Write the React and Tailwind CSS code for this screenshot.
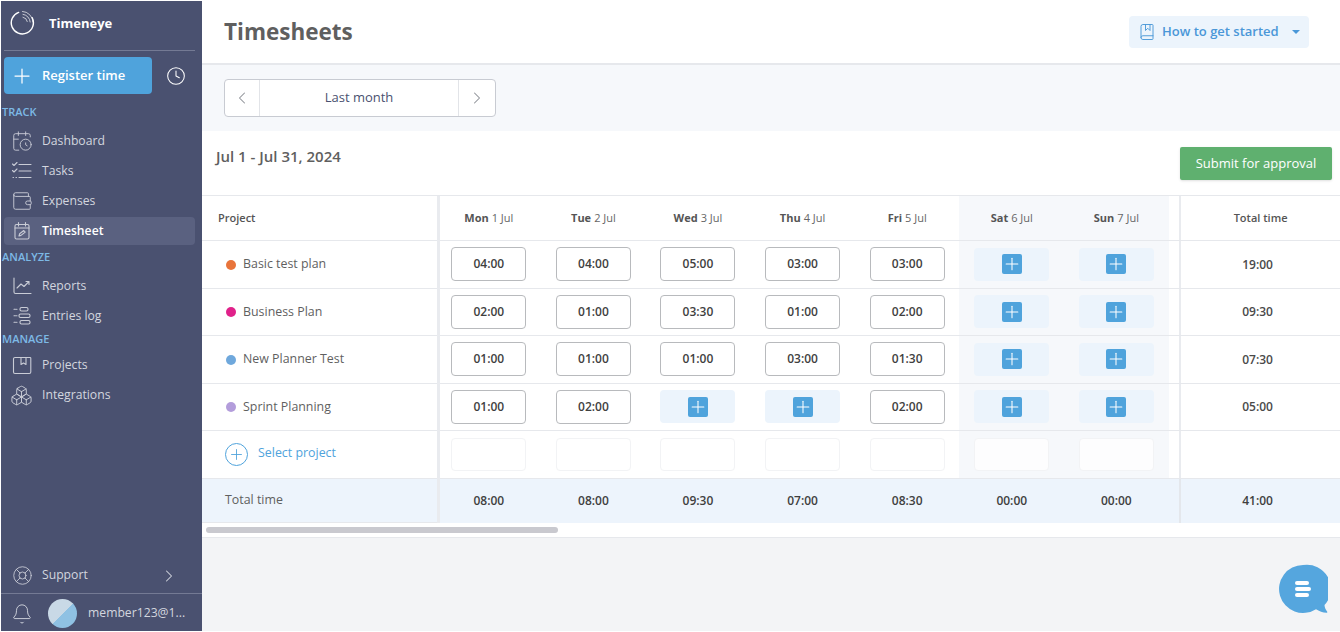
import { Bell, BookMarked, Boxes, CalendarClock, ChevronLeft, ChevronRight, Clock, LifeBuoy, Plus, Wallet } from "lucide-react";

const days = ["Mon", "Tue", "Wed", "Thu", "Fri", "Sat", "Sun"];

const projects = [
  { name: "Basic test plan", color: "bg-[#e8743b]", total: "19:00", times: ["04:00", "04:00", "05:00", "03:00", "03:00", null, null] },
  { name: "Business Plan", color: "bg-[#e0218a]", total: "09:30", times: ["02:00", "01:00", "03:30", "01:00", "02:00", null, null] },
  { name: "New Planner Test", color: "bg-[#6fa8dc]", total: "07:30", times: ["01:00", "01:00", "01:00", "03:00", "01:30", null, null] },
  { name: "Sprint Planning", color: "bg-[#b39ddb]", total: "05:00", times: ["01:00", "02:00", null, null, "02:00", null, null] },
];

const totals = ["08:00", "08:00", "09:30", "07:00", "08:30", "00:00", "00:00"];

function LogoIcon() {
  return (
    <svg width="25" height="25" viewBox="0 0 26 26" fill="none" stroke="white" strokeLinecap="round">
      <path d="M9 2.5a11.5 11.5 0 1 0 14 5.5" strokeWidth="1.5" />
      <path d="M13 1.5a11.5 11.5 0 0 1 11 11" strokeWidth="1" opacity="0.7" />
      <path d="M13.5 4.5a8.5 8.5 0 0 1 7.5 8" strokeWidth="1" opacity="0.7" />
      <path d="M13.5 7.5a5.5 5.5 0 0 1 4.5 4.5" strokeWidth="1" opacity="0.7" />
    </svg>
  );
}

function TimesheetIcon() {
  return (
    <svg width="20" height="20" viewBox="0 0 20 20" fill="none" stroke="currentColor" strokeWidth="1.1" strokeLinecap="round" strokeLinejoin="round">
      <rect x="3" y="3.5" width="14" height="14.5" rx="1.5" />
      <path d="M3 7h14M6.5 1.5v3.5M13.5 1.5v3.5" />
      <path d="M7 15l.6-2.2 4.2-3.3 1.4 1.6-4.2 3.3z" />
    </svg>
  );
}

function ReportsIcon() {
  return (
    <svg width="20" height="20" viewBox="0 0 20 20" fill="none" stroke="currentColor" strokeWidth="1.1" strokeLinecap="round" strokeLinejoin="round">
      <path d="M2 2v14a1.5 1.5 0 0 0 1.5 1.5H19" />
      <path d="M5 12l4-4 3 2.5 5-5M14 5.5h3v3" />
    </svg>
  );
}

function EntriesIcon() {
  return (
    <svg width="20" height="20" viewBox="0 0 20 20" fill="none" stroke="currentColor" strokeWidth="1.1" strokeLinecap="round" strokeLinejoin="round">
      <rect x="8" y="1.5" width="8" height="3.5" rx="1.5" />
      <rect x="7" y="8" width="11" height="3.5" rx="1.5" />
      <rect x="8" y="14.5" width="10" height="3.5" rx="1.5" />
      <path d="M2 3.2h1.5M4.5 3.2H5M2 9.8h1.5M4.5 9.8H5M2 16.2h1.5M4.5 16.2H5" />
    </svg>
  );
}

function ProjectsIcon() {
  return (
    <svg width="20" height="20" viewBox="0 0 20 20" fill="none" stroke="currentColor" strokeWidth="1.1" strokeLinecap="round" strokeLinejoin="round">
      <path d="M1.5 4a1.5 1.5 0 0 1 1.5-1.5h15a.8.8 0 0 1 .8.8V17a1.5 1.5 0 0 1-1.5 1.5H3A1.5 1.5 0 0 1 1.5 17z" />
      <path d="M9 2.5v7l2.5-1.5L14 9.5v-7" />
    </svg>
  );
}

function TasksIcon() {
  return (
    <svg width="22" height="20" viewBox="0 0 22 20" fill="none" stroke="currentColor" strokeWidth="1.1" strokeLinecap="round" strokeLinejoin="round">
      <path d="M8 3.5h12M8 10h12M8 16.5h12" />
      <path d="M1.5 3l1.5 1.5L6 1.5M1.5 9.5L3 11l3-3M2 16.5h.5M5 16.5h.5" />
    </svg>
  );
}

function NavItem({ icon, label, active }) {
  return (
    <div className={`flex h-[28px] mt-[2px] items-center rounded-[4px] ml-[3px] mr-[7px] ${active ? "bg-[#5a6180] text-white font-semibold" : "text-[#d3d6df]"}`}>
      <span className="mr-[3px] flex w-[35px] shrink-0 justify-center text-[#c9ccd6]">{icon}</span>
      <span className="text-[12.2px]">{label}</span>
    </div>
  );
}

function SectionLabel({ children, className }) {
  return <div className={`pl-px text-[11px] font-semibold leading-[16px] text-[#7db9e6] ${className}`}>{children}</div>;
}

function Sidebar() {
  return (
    <aside className="flex w-[201px] shrink-0 flex-col bg-[#4a5170]">
      <div className="mx-[3px] mr-[7px] flex h-[50px] items-start gap-[14px] border-b border-[#747a94] pl-[6px] pt-[9px]">
        <LogoIcon />
        <span className="mt-[4px] text-[13px] font-bold text-white">Timeneye</span>
      </div>
      <div className="mt-[6px] flex items-center pl-[3px]">
        <button className="flex h-[37px] w-[148px] items-center rounded-[4px] bg-[#4fa3dc] pl-[6px] text-[13px] font-semibold text-white">
          <Plus size={24} strokeWidth={1.25} className="mr-[8px]" />
          Register time
        </button>
        <Clock size={20} strokeWidth={1.25} className="ml-[14px] text-white" />
      </div>
      <SectionLabel className="mt-[10px]">TRACK</SectionLabel>
      <div className="mt-[5px]">
        <NavItem icon={<CalendarClock size={22} strokeWidth={1} />} label="Dashboard" />
        <NavItem icon={<TasksIcon />} label="Tasks" />
        <NavItem icon={<Wallet size={22} strokeWidth={1} />} label="Expenses" />
        <NavItem icon={<TimesheetIcon />} label="Timesheet" active />
      </div>
      <SectionLabel className="mt-[4px]">ANALYZE</SectionLabel>
      <div className="mt-[5px]">
        <NavItem icon={<ReportsIcon />} label="Reports" />
        <NavItem icon={<EntriesIcon />} label="Entries log" />
      </div>
      <SectionLabel className="mt-[1px]">MANAGE</SectionLabel>
      <div className="mt-[2px]">
        <NavItem icon={<ProjectsIcon />} label="Projects" />
        <NavItem icon={<Boxes size={23} strokeWidth={1} />} label="Integrations" />
      </div>
      <div className="mt-auto flex h-[36px] items-center border-b border-[#747a94] text-[12.2px] text-[#d3d6df]">
        <span className="flex w-[41px] justify-center pl-[1px] text-[#c9ccd6]"><LifeBuoy size={21} strokeWidth={1} /></span>
        <span>Support</span>
        <ChevronRight size={20} strokeWidth={1.25} className="ml-auto mr-[23px]" />
      </div>
      <div className="flex h-[37px] items-center pt-[2px] text-[12.2px] text-[#d3d6df]">
        <span className="flex w-[41px] justify-center"><Bell size={22} strokeWidth={1} /></span>
        <span className="ml-[6px] h-[29px] w-[29px] shrink-0 rounded-full bg-[linear-gradient(135deg,#c9d9e6_0%,#c9d9e6_50%,#8fc1e3_50%,#8fc1e3_100%)]" />
        <span className="ml-[11px]">member123@1...</span>
      </div>
    </aside>
  );
}

function TimeCell({ time, weekend }) {
  const bg = weekend ? "bg-[#f6f8fb]" : "";
  return (
    <div className={`flex items-center justify-center border-b border-[#e6e8ec] ${bg}`}>
      {time ? (
        <div className="flex h-[34px] w-[75px] items-center justify-center rounded-[4px] border border-[#b8babd] bg-white text-[12px] font-semibold text-[#3f3f3f]">
          {time}
        </div>
      ) : (
        <div className="flex h-[33px] w-[75px] items-center justify-center rounded-[4px] bg-[#ecf4fc]">
          <span className="flex h-[20px] w-[20px] items-center justify-center rounded-[2px] bg-[#4fa3dc] text-white">
            <Plus size={20} strokeWidth={1.25} />
          </span>
        </div>
      )}
    </div>
  );
}

function Gap({ className }) {
  return <div className={`border-b border-[#e6e8ec] shadow-[inset_-2px_0_0_#e9ebef] ${className}`} />;
}

function ProjectCell({ children, className }) {
  return (
    <div className={`relative z-10 flex items-center border-b border-[#e6e8ec] shadow-[3px_0_0_#e9ebef] ${className}`}>
      {children}
    </div>
  );
}

function TimesheetTable() {
  return (
    <div className="grid grid-cols-[234.5px_repeat(7,104.6px)_12.5px_1fr] grid-rows-[45px_repeat(5,47.5px)_44px] border-t border-[#e6e8ec] text-[12.4px]">
      <ProjectCell className="pl-[16px] text-[11px] font-semibold text-[#555]">Project</ProjectCell>
      {days.map((day, i) => (
        <div key={day} className={`flex items-center justify-center border-b border-[#e6e8ec] text-[11px] text-[#666] ${i > 4 ? "bg-[#f6f8fb]" : ""}`}>
          <span className="mr-[3px] font-bold text-[#555]">{day}</span> {i + 1} Jul
        </div>
      ))}
      <Gap />
      <div className="flex items-center justify-center border-b border-[#e6e8ec] text-[11px] font-semibold text-[#555]">Total time</div>

      {projects.map((p) => (
        <div key={p.name} className="contents">
          <ProjectCell className="pl-[24px] pt-px text-[#5f5f5f]">
            <span className={`mr-[7px] h-[10px] w-[10px] rounded-full ${p.color}`} />
            {p.name}
          </ProjectCell>
          {p.times.map((t, i) => (
            <TimeCell key={i} time={t} weekend={i > 4} />
          ))}
          <Gap />
          <div className="flex items-center justify-center border-b border-[#e6e8ec] pr-[6px] pt-px text-[12px] font-semibold text-[#4a4a4a]">{p.total}</div>
        </div>
      ))}

      <ProjectCell className="pl-[23px] text-[#4fa3dc]">
        <span className="mr-[10px] flex h-[23px] w-[23px] items-center justify-center rounded-full border border-[#4fa3dc]">
          <Plus size={17} strokeWidth={1.25} />
        </span>
        <span className="-mt-[2px]">Select project</span>
      </ProjectCell>
      {days.map((day, i) => (
        <div key={day} className={`flex items-center justify-center border-b border-[#e6e8ec] ${i > 4 ? "bg-[#f6f8fb]" : ""}`}>
          <div className={`h-[33px] w-[75px] rounded-[4px] border border-[#f2f3f5] ${i > 4 ? "bg-[#fdfdfe]" : ""}`} />
        </div>
      ))}
      <Gap />
      <div className="border-b border-[#e6e8ec]" />

      <ProjectCell className="bg-[#edf4fc] pl-[23px] pt-px text-[#5f5f5f]">Total time</ProjectCell>
      {totals.map((t, i) => (
        <div key={i} className="flex items-center justify-center bg-[#edf4fc] text-[12px] font-semibold text-[#3f3f3f]">{t}</div>
      ))}
      <div className="bg-[#edf4fc] shadow-[inset_-2px_0_0_#e4e7ec]" />
      <div className="flex items-center justify-center bg-[#edf4fc] pr-[6px] text-[12px] font-semibold text-[#3f3f3f]">41:00</div>
    </div>
  );
}

function ChatBubble() {
  return (
    <div className="absolute bottom-[17px] right-[12px]">
      <svg width="50" height="51" viewBox="0 0 50 51">
        <path d="M25 1a24 24 0 1 0 13 44.2c3 2 7 3.3 10.5 3.6.8 0 1-.6.6-1.2-1.5-2-2.5-4-2.6-6.6A24 24 0 0 0 25 1z" fill="#55a6de" />
        <rect x="17" y="17" width="14" height="4" rx="2" fill="white" />
        <rect x="17" y="23" width="16" height="4" rx="2" fill="white" />
        <rect x="17" y="29" width="14" height="4" rx="2" fill="white" />
      </svg>
    </div>
  );
}

export default function App() {
  return (
    <div className="relative flex h-[632px] w-[1340px] overflow-hidden bg-white py-px pl-px font-['Open_Sans',sans-serif]">
      <Sidebar />
      <main className="flex min-w-0 flex-1 flex-col bg-[#f3f4f6]">
        <header className="flex h-[64px] shrink-0 items-center justify-between border-b-2 border-[#e6e8ec] bg-white pl-[22px] pr-[31px]">
          <h1 className="text-[22.5px] font-bold text-[#5f5f5f]">Timesheets</h1>
          <button className="flex h-[32px] w-[180px] items-center rounded-[4px] bg-[#ecf4fc] pl-[9px] text-[13px] font-semibold text-[#4a97d8]">
            <BookMarked size={18} strokeWidth={1.25} className="mr-[6px]" />
            How to get started
            <span className="ml-[13px] h-0 w-0 border-x-[4px] border-t-[4px] border-x-transparent border-t-[#4a97d8]" />
          </button>
        </header>
        <div className="flex h-[66px] shrink-0 items-center bg-[#f6f8fb] pl-[22px]">
          <div className="flex h-[38px] w-[272px] items-center rounded-[4px] border border-[#c8cbd2] bg-white text-[13px] text-[#4a5170]">
            <span className="flex h-full w-[35px] items-center justify-center border-r border-[#e2e4e8] text-[#8c8f96]"><ChevronLeft size={20} strokeWidth={1.25} /></span>
            <span className="flex-1 text-center">Last month</span>
            <span className="flex h-full w-[37px] items-center justify-center border-l border-[#e2e4e8] text-[#8c8f96]"><ChevronRight size={20} strokeWidth={1.25} /></span>
          </div>
        </div>
        <section className="shrink-0 border-b border-[#e6e8ec] bg-white">
          <div className="flex h-[64px] items-start justify-between pl-[14px] pr-[8px]">
            <span className="mt-[14px] text-[15px] font-semibold text-[#5f5f5f]">Jul 1 - Jul 31, 2024</span>
            <button className="mt-[16px] h-[33px] w-[152px] rounded-[2px] bg-[#5fb06f] text-[13px] text-white shadow-sm">Submit for approval</button>
          </div>
          <TimesheetTable />
          <div className="flex h-[14px] items-center pl-[4px]">
            <div className="h-[6px] w-[352px] rounded-full bg-[#c9c9cf]" />
          </div>
        </section>
      </main>
      <ChatBubble />
    </div>
  );
}
